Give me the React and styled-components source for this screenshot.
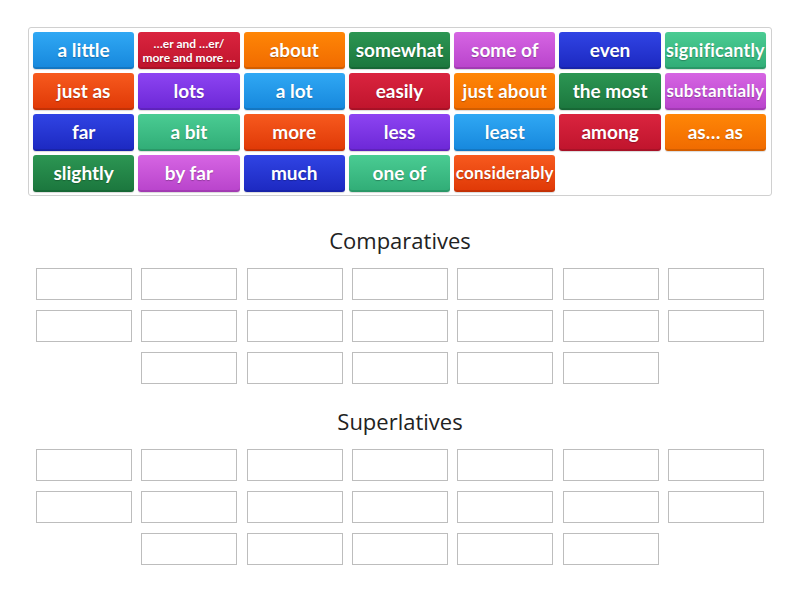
import React from "react";
import styled, { createGlobalStyle } from "styled-components";

const Global = createGlobalStyle`
  html, body { margin: 0; padding: 0; background: #fff; }
  body { font-family: Lato, "Open Sans", sans-serif; }
`;

const Page = styled.div`
  width: 800px;
  padding-top: 27px;
`;

const TileBank = styled.div`
  box-sizing: border-box;
  margin-left: 28px;
  width: 744px;
  border: 1px solid #d0d0d0;
  border-radius: 3px;
  padding: 4px 5px 3px 4px;
  display: grid;
  grid-template-columns: repeat(7, 1fr);
  grid-auto-rows: 37px;
  gap: 4px;
`;

const COLORS = {
  lightblue: ["#30a8f4", "#1687dc"],
  crimson: ["#da243f", "#bf142c"],
  orange: ["#ff8606", "#f06a00"],
  darkgreen: ["#2c9653", "#1b763d"],
  pink: ["#d665e3", "#b843cb"],
  darkblue: ["#3044e4", "#1c28c0"],
  teal: ["#4acc93", "#30ac76"],
  redorange: ["#f75a1e", "#df3806"],
  violet: ["#8d44f2", "#6c27d6"],
};

const Tile = styled.div`
  display: flex;
  align-items: center;
  justify-content: center;
  text-align: center;
  border-radius: 3px;
  background: linear-gradient(
    to bottom,
    ${(p) => COLORS[p.$c][0]},
    ${(p) => COLORS[p.$c][1]}
  );
  box-shadow: inset 0 -2px 0 rgba(0, 0, 0, 0.12), 0 1px 1px rgba(0, 0, 0, 0.15);
  color: #fff;
  font-family: Lato, "Open Sans", sans-serif;
  font-weight: 700;
  font-size: ${(p) => p.$size || 19}px;
  line-height: ${(p) => (p.$size && p.$size < 14 ? 1.15 : 1.2)};
  letter-spacing: ${(p) => (p.$size && p.$size < 19 && p.$size > 14 ? "0.2px" : "0")};
  text-shadow: 0 1px 1px rgba(0, 0, 0, 0.25);
  white-space: nowrap;
  overflow: hidden;
`;

const Section = styled.section`
  display: flex;
  flex-direction: column;
  align-items: center;
  margin-top: ${(p) => p.$top}px;
`;

const Title = styled.h2`
  margin: 0 0 13px;
  font-family: "Open Sans", Lato, sans-serif;
  font-weight: 400;
  font-size: 22px;
  line-height: 30px;
  color: #222;
`;

const DropGrid = styled.div`
  width: 728px;
  display: flex;
  flex-wrap: wrap;
  justify-content: center;
  column-gap: 9.33px;
  row-gap: 10px;
`;

const Slot = styled.div`
  box-sizing: border-box;
  width: 96px;
  height: 32px;
  border: 1px solid #bdbdbd;
  background: #fff;
`;

const tiles = [
  ["a little", "lightblue"],
  ["…er and …er/\nmore and more …", "crimson", 12],
  ["about", "orange"],
  ["somewhat", "darkgreen"],
  ["some of", "pink"],
  ["even", "darkblue"],
  ["significantly", "teal", 18],
  ["just as", "redorange"],
  ["lots", "violet"],
  ["a lot", "lightblue"],
  ["easily", "crimson"],
  ["just about", "orange", 18.5],
  ["the most", "darkgreen"],
  ["substantially", "pink", 17],
  ["far", "darkblue"],
  ["a bit", "teal"],
  ["more", "redorange"],
  ["less", "violet"],
  ["least", "lightblue"],
  ["among", "crimson"],
  ["as… as", "orange"],
  ["slightly", "darkgreen"],
  ["by far", "pink"],
  ["much", "darkblue"],
  ["one of", "teal"],
  ["considerably", "redorange", 17],
];

const slots = Array.from({ length: 19 });

function Group({ title, top }) {
  return (
    <Section $top={top}>
      <Title>{title}</Title>
      <DropGrid>
        {slots.map((_, i) => (
          <Slot key={i} />
        ))}
      </DropGrid>
    </Section>
  );
}

export default function App() {
  return (
    <Page>
      <Global />
      <TileBank>
        {tiles.map(([text, c, size], i) => (
          <Tile key={i} $c={c} $size={size}>
            {size && size < 14 ? (
              <span>
                {text.split("\n").map((l, j) => (
                  <React.Fragment key={j}>
                    {j > 0 && <br />}
                    {l}
                  </React.Fragment>
                ))}
              </span>
            ) : (
              text
            )}
          </Tile>
        ))}
      </TileBank>
      <Group title="Comparatives" top={29} />
      <Group title="Superlatives" top={22} />
    </Page>
  );
}
